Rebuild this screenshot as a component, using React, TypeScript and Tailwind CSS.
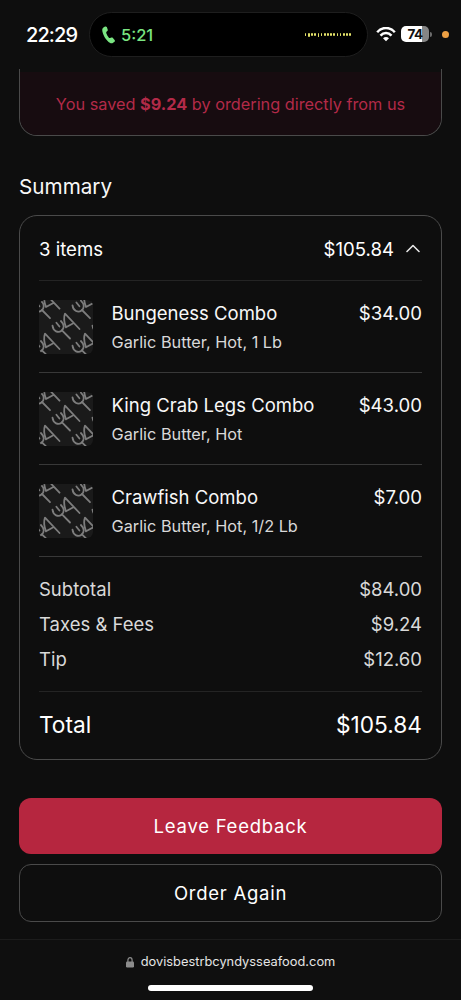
import React from 'react';
import clsx from 'clsx';

interface OrderItem {
    name: string;
    options: string;
    price: string;
}

const items: OrderItem[] = [
    { name: 'Bungeness Combo', options: 'Garlic Butter, Hot, 1 Lb', price: '$34.00' },
    { name: 'King Crab Legs Combo', options: 'Garlic Butter, Hot', price: '$43.00' },
    { name: 'Crawfish Combo', options: 'Garlic Butter, Hot, 1/2 Lb', price: '$7.00' },
];

const charges = [
    { label: 'Subtotal', amount: '$84.00' },
    { label: 'Taxes & Fees', amount: '$9.24' },
    { label: 'Tip', amount: '$12.60' },
];

const waveform = [2.4, 4, 3, 3, 4, 2.6, 2.6, 2.4, 2.4, 2.4, 2.4, 2.4, 2.2, 2.2, 2.2];

// Fork and knife pairs sit on a staggered grid inside a thumbnail
const pairs = [
    [0, 0], [-20, -20.3], [20, -20.3], [-20, 20], [20, 20], [40, 0],
];

const StatusBar: React.FC = () => (
    <header className="flex h-[69px] shrink-0 items-start">
        <span className="mt-[23px] ml-[26px] w-[63px] text-[20px] leading-6 font-medium tracking-[-0.9px] text-white">22:29</span>
        <div className="mt-[12px] flex h-[45px] w-[279px] items-center rounded-full border border-[#1e1e1e] bg-black">
            <svg className="ml-[12px] h-[18px] w-[14px]" viewBox="0 0 14 18" fill="#7ae582">
                <path d="M1.1 1.8 3 .6c.6-.4 1.4-.2 1.8.4l.9 2.4c.2.6.1 1.2-.4 1.6l-.8.8c-.4.4-.4.9-.2 1.5.6 1.6 1.3 2.9 2.4 4.1.4.5.9.7 1.4.5l1.2-.4c.6-.2 1.2-.1 1.6.4l1.7 2c.5.6.4 1.3-.1 1.8l-1.4 1.1c-.9.7-2.2.7-3.3 0C4.6 14.7 1.5 10.3.4 5.5.1 4 .2 2.6 1.1 1.8Z" />
            </svg>
            <span className="ml-[5px] text-[16.5px] leading-5 font-medium text-[#7ae582]">5:21</span>
            <div className="mr-[16px] ml-auto flex items-center gap-[1.6px]">
                {waveform.map((height, i) => (
                    <span key={i} className="w-[1.6px] rounded-full bg-[#e5e36a]" style={{ height }} />
                ))}
            </div>
        </div>
        <svg className="mt-[27px] ml-[8px] h-[15px] w-[20px]" viewBox="0 0 20 15" fill="none" stroke="#fff" strokeWidth="2.5">
            <path d="M1.2 5.2C6-.4 14-.4 18.8 5.2" />
            <path d="M4.5 8.7c3.1-3.5 7.9-3.5 11 0" />
            <path d="M10 14.3 7 11.3c1.7-1.7 4.3-1.7 6 0Z" fill="#fff" stroke="none" />
        </svg>
        <div className="mt-[26px] ml-[5px] flex items-center gap-[1px]">
            <div className="flex h-[16px] w-[28px] items-center justify-center rounded-[5px] bg-linear-to-r from-white from-75% to-[#858585] to-75% text-[13.5px] font-bold tracking-[-0.5px] text-[#111]">74</div>
            <span className="h-[5px] w-[1.5px] rounded-r-full bg-[#6b6b6b]" />
        </div>
        <span className="mt-[31px] ml-[10px] size-[7px] rounded-full bg-[#eda044]" />
    </header>
);

const Thumbnail: React.FC = () => (
    <svg className="mt-[0.5px] size-[54px] shrink-0 rounded-md bg-[#1a1a1a]" viewBox="0 0 54 54" fill="none" stroke="#7d7d7d" strokeWidth="1.8" strokeLinecap="round" strokeLinejoin="round">
        {pairs.map(([x, y]) => (
            <g key={`${x},${y}`} transform={`translate(${x} ${y})`}>
                <path d="m31 38.5-8-8.2" />
                <path d="M13.5 25.7c.7 5.8 5.8 7.6 9 5.1 3-2.4 3.1-6.3-.6-9.8" />
                <path d="M17.4 22.8 20.4 26.5" />
                <path d="M40.5 29 26 13.6c-1.5 4-.9 8.8 1 13.7l6.9-3.8" />
            </g>
        ))}
    </svg>
);

const ItemRow: React.FC<{ item: OrderItem }> = ({ item }) => (
    <li className="flex h-[92px] items-start border-b border-[#383838] pt-[18px]">
        <Thumbnail />
        <div className="ml-[18.5px] flex-1">
            <h3 className="text-[18.5px] leading-[28px] text-[#f8f8f8]">{item.name}</h3>
            <p className="mt-px text-[16.3px] leading-[28px] text-[#d9d9d9]">{item.options}</p>
        </div>
        <span className="text-[18.6px] leading-[28px] text-[#f8f8f8]">{item.price}</span>
    </li>
);

const ActionButton: React.FC<{ primary?: boolean; children: React.ReactNode }> = ({ primary, children }) => (
    <button
        className={clsx(
            'w-full rounded-xl text-[18.5px] tracking-[0.75px] text-white',
            primary ? 'h-[56px] bg-[#b6263f] pt-[2px]' : 'h-[58px] border border-[#4a4a4a] pt-px'
        )}
    >
        {children}
    </button>
);

const App: React.FC = () => {
    return (
        <div className="flex h-[1000px] w-[461px] flex-col overflow-hidden bg-[#0e0e0e] font-['Inter','Liberation_Sans',sans-serif]">
            <StatusBar />

            <main className="flex flex-col px-[19px]">
                {/* Savings banner, scrolled under the status bar */}
                <div className="h-[67px] rounded-b-[18px] border border-t-0 border-[#4a4a4a] pt-[3px]">
                    <p className="flex h-[63px] items-center justify-center rounded-b-[17px] bg-[#170c10] pt-px text-[16.3px] text-[#b32a48]">
                        <span>You saved <b className="font-bold">$9.24</b> by ordering directly from us</span>
                    </p>
                </div>

                <h2 className="mt-[37px] text-[20.7px] leading-[28px] text-[#f8f8f8]">Summary</h2>

                <section className="mt-[14px] h-[545px] rounded-[18px] border border-[#4a4a4a] px-[19px]">
                    <div className="flex h-[65px] items-center border-b border-[#242424] pt-[3px] text-[18.6px] text-white">
                        <span>3 items</span>
                        <span className="ml-auto">$105.84</span>
                        <svg className="mr-[2px] mb-[3px] ml-[12px] h-[9px] w-[14px]" viewBox="0 0 14 9" fill="none" stroke="#e5e5e5" strokeWidth="1.6" strokeLinecap="round" strokeLinejoin="round">
                            <path d="m1 7.5 6-6 6 6" />
                        </svg>
                    </div>
                    <ul>
                        {items.map((item) => (
                            <ItemRow key={item.name} item={item} />
                        ))}
                    </ul>
                    <dl className="flex h-[135px] flex-col border-b border-[#242424] pt-[15px] text-[18.5px] text-[#d9d9d9]">
                        {charges.map(({ label, amount }) => (
                            <div key={label} className="flex h-[35px] items-center justify-between">
                                <dt>{label}</dt>
                                <dd>{amount}</dd>
                            </div>
                        ))}
                    </dl>
                    <div className="flex h-[67px] items-center justify-between text-[22.7px] text-white">
                        <span>Total</span>
                        <span>$105.84</span>
                    </div>
                </section>

                <div className="mt-[38px] flex flex-col gap-[10px]">
                    <ActionButton primary>Leave Feedback</ActionButton>
                    <ActionButton>Order Again</ActionButton>
                </div>
            </main>

            <footer className="mt-auto flex h-[61px] shrink-0 flex-col items-center border-t border-[#1c1c1c] bg-[#0f0f0f]">
                <div className="mt-[12px] flex items-center gap-[7px] text-[12.85px] leading-5 text-[#e5e5e5]">
                    <svg className="h-[11px] w-[8px]" viewBox="0 0 8 11">
                        <rect y="4.5" width="8" height="6" rx="1.2" fill="#8c8c8c" />
                        <path d="M1.9 5V3.2a2.1 2.5 0 0 1 4.2 0V5" fill="none" stroke="#8c8c8c" strokeWidth="1.2" />
                    </svg>
                    <span>dovisbestrbcyndysseafood.com</span>
                </div>
                <div className="mt-[13px] h-[6px] w-[165px] rounded-full bg-white" />
            </footer>
        </div>
    );
};

export default App;
